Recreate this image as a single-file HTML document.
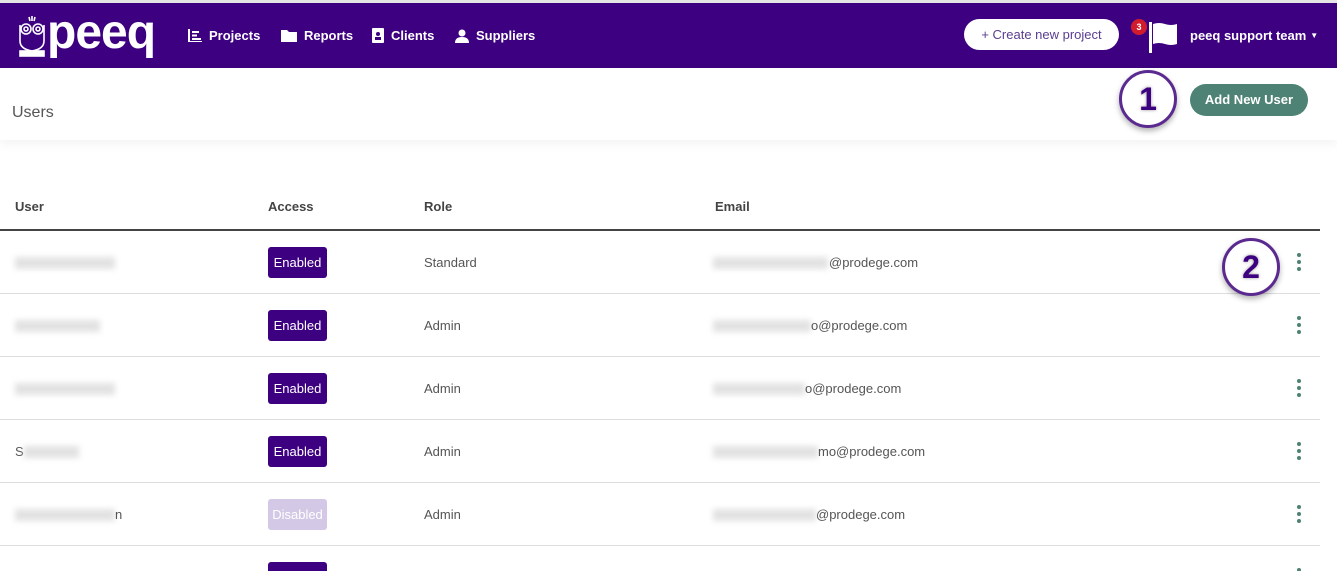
<!DOCTYPE html>
<html><head><style>
*{box-sizing:border-box;margin:0;padding:0}
html,body{width:1337px;height:571px;overflow:hidden}
body{background:#fff;font-family:"Liberation Sans",sans-serif;position:relative}
.top{position:absolute;left:0;top:0;width:1337px;height:3px;background:#e4e4e4}
nav{position:absolute;left:0;top:3px;width:1337px;height:65px;background:#3d0080;color:#fff}
.logo{position:absolute;left:47px;top:6px;font-size:48px;font-weight:bold;letter-spacing:-1px;line-height:48px}
.navi{position:absolute;top:25px;font-size:13px;font-weight:bold;display:flex;align-items:center;gap:7px}
.btn1{position:absolute;left:964px;top:16px;width:155px;height:31px;background:#fff;border-radius:16px;color:#5a3d90;font-size:13px;text-align:center;line-height:31px}
.badge{position:absolute;left:1131px;top:16px;width:16px;height:16px;border-radius:50%;background:#d01c2c;font-size:9px;font-weight:bold;text-align:center;line-height:16px}
.hdr{position:absolute;left:0;top:68px;width:1337px;height:72px;background:#fff;box-shadow:0 4px 10px rgba(0,0,0,.05)}
.circle{position:absolute;width:58px;height:58px;border:3px solid #5b2a90;border-radius:50%;background:#fff;box-shadow:0 3px 6px rgba(0,0,0,.3);font-size:32px;font-weight:bold;color:#3d0080;text-align:center;line-height:52px;text-shadow:0 0 3px #999}
.add{position:absolute;left:1190px;top:84px;width:118px;height:32px;background:#4e8274;border-radius:16px;color:#fff;font-size:13px;font-weight:bold;text-align:center;line-height:32px}
.th{position:absolute;top:199px;font-size:13px;font-weight:bold;color:#444}
.hl{position:absolute;left:0;top:229px;width:1320px;height:2px;background:#444}
.row{position:absolute;left:0;width:1320px;height:63px;border-bottom:1px solid #ddd;font-size:13px;color:#555}
.row>*{position:absolute;top:24px}
.pill{top:16px!important;left:268px;width:59px;height:31px;border-radius:3px;background:#3d0080;color:#fff;text-align:center;line-height:31px;font-size:13px}
.blur{background:#e2e2e2;filter:blur(3px);height:12px;top:26px!important}
.dots{left:1297px;top:22px!important;width:5px}
.dots i{display:block;width:4px;height:4px;border-radius:50%;background:#4e8274;margin-bottom:3px}
</style></head><body>
<div class="top"></div>
<nav>
<svg style="position:absolute;left:17px;top:12px" width="30" height="42" viewBox="0 0 30 42" fill="none" stroke="#fff" stroke-width="1.6"><path d="M12 2l1 4M15 1v5M18 2l-1 4"/><circle cx="9" cy="14" r="5"/><circle cx="21" cy="14" r="5"/><circle cx="9" cy="14" r="2"/><circle cx="21" cy="14" r="2"/><path d="M3 10v16q0 8 12 10q12-2 12-10V10"/><rect x="3" y="36" width="24" height="5" fill="#fff"/></svg>
<div class="logo">peeq</div>
<div class="navi" style="left:188px"><svg width="14" height="13"><path d="M1 0v13h13" stroke="#fff" stroke-width="2" fill="none"/><rect x="4" y="2" width="7" height="2" fill="#fff"/><rect x="4" y="5.5" width="5" height="2" fill="#fff"/><rect x="4" y="9" width="9" height="2" fill="#fff"/></svg>Projects</div>
<div class="navi" style="left:281px"><svg width="16" height="13"><path d="M0 1h6l2 2h8v10H0z" fill="#fff"/></svg>Reports</div>
<div class="navi" style="left:372px"><svg width="12" height="15"><rect width="12" height="15" rx="1" fill="#fff"/><circle cx="6" cy="6" r="2" fill="#3d0080"/><rect x="3" y="9" width="6" height="3" fill="#3d0080"/></svg>Clients</div>
<div class="navi" style="left:455px"><svg width="14" height="14"><circle cx="7" cy="4" r="3.5" fill="#fff"/><path d="M0 14q0-6 7-6t7 6z" fill="#fff"/></svg>Suppliers</div>
<div class="btn1">+ Create new project</div>
<svg style="position:absolute;left:1146px;top:17px" width="34" height="34" viewBox="0 0 34 34"><rect x="3" y="2" width="3" height="31" fill="#fff"/><path d="M7 4q6-2 12 0t12 0v20q-6 2-12 0t-12 0z" fill="#fff"/></svg>
<div class="badge">3</div>
<div class="navi" style="left:1190px;top:25px;gap:4px">peeq support team<span style="font-size:8px">▼</span></div>
</nav>
<div class="hdr"><div style="position:absolute;left:12px;top:36px;font-size:16px;color:#555">Users</div></div>
<div class="circle" style="left:1119px;top:70px">1</div>
<div class="add">Add New User</div>
<div class="th" style="left:15px">User</div>
<div class="th" style="left:268px">Access</div>
<div class="th" style="left:424px">Role</div>
<div class="th" style="left:715px">Email</div>
<div class="hl"></div>

<div class="row" style="top:231px"><span class="blur" style="left:15px;width:100px"></span><span class="pill">Enabled</span><span style="left:424px">Standard</span><span class="blur" style="left:713px;width:115px"></span><span style="left:829px">@prodege.com</span><span class="dots"><i></i><i></i><i></i></span></div>
<div class="row" style="top:294px"><span class="blur" style="left:15px;width:85px"></span><span class="pill">Enabled</span><span style="left:424px">Admin</span><span class="blur" style="left:713px;width:98px"></span><span style="left:811px">o@prodege.com</span><span class="dots"><i></i><i></i><i></i></span></div>
<div class="row" style="top:357px"><span class="blur" style="left:15px;width:100px"></span><span class="pill">Enabled</span><span style="left:424px">Admin</span><span class="blur" style="left:713px;width:92px"></span><span style="left:805px">o@prodege.com</span><span class="dots"><i></i><i></i><i></i></span></div>
<div class="row" style="top:420px"><span style="left:15px">S</span><span class="blur" style="left:24px;width:55px"></span><span class="pill">Enabled</span><span style="left:424px">Admin</span><span class="blur" style="left:713px;width:105px"></span><span style="left:818px">mo@prodege.com</span><span class="dots"><i></i><i></i><i></i></span></div>
<div class="row" style="top:483px"><span class="blur" style="left:15px;width:100px"></span><span style="left:115px">n</span><span class="pill" style="background:#d3c8e6">Disabled</span><span style="left:424px">Admin</span><span class="blur" style="left:713px;width:103px"></span><span style="left:816px">@prodege.com</span><span class="dots"><i></i><i></i><i></i></span></div>
<div class="row" style="top:546px;height:25px;overflow:hidden;border:none"><span class="pill">Enabled</span><span class="dots"><i></i></span></div>
<div class="circle" style="left:1222px;top:238px">2</div>
</body></html>
